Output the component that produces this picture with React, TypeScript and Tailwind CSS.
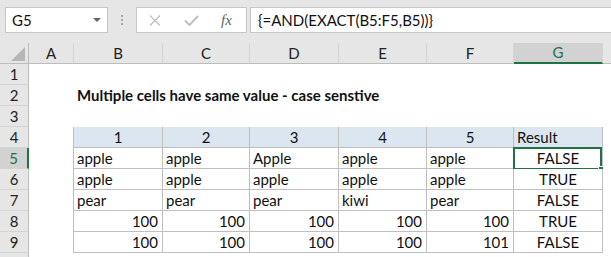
import React from 'react';

const font = { fontFamily: "Lato, 'Open Sans', sans-serif" };

const colWidths = ['w-[29px]', 'w-[45px]', 'w-[89px]', 'w-[87px]', 'w-[89px]', 'w-[88px]', 'w-[87px]', 'w-[89px]'];
const letters = ['A', 'B', 'C', 'D', 'E', 'F', 'G'];

type Cell = { v: string; align: 'l' | 'r' | 'c' };

const t = (v: string): Cell => ({ v, align: 'l' });
const n = (v: string): Cell => ({ v, align: 'r' });
const b = (v: string): Cell => ({ v, align: 'c' });

const tableRows: Cell[][] = [
  [b('1'), b('2'), b('3'), b('4'), b('5'), t('Result')],
  [t('apple'), t('apple'), t('Apple'), t('apple'), t('apple'), b('FALSE')],
  [t('apple'), t('apple'), t('apple'), t('apple'), t('apple'), b('TRUE')],
  [t('pear'), t('pear'), t('pear'), t('kiwi'), t('pear'), b('FALSE')],
  [n('100'), n('100'), n('100'), n('100'), n('100'), b('TRUE')],
  [n('100'), n('100'), n('100'), n('100'), n('101'), b('FALSE')],
];

const alignCls = { l: 'justify-start pl-[3px]', r: 'justify-end pr-[4px]', c: 'justify-center' };

function RowHeader({ label, selected }: { label: string; selected?: boolean }) {
  return (
    <div
      className={`w-[29px] shrink-0 h-full flex items-center justify-center border-b border-[#d4d4d4] text-[15px] ${
        selected ? 'bg-[#d2d2d2] text-[#217346] border-r-2 border-r-[#217346]' : 'bg-[#e6e6e6] text-[#222] border-r border-r-[#bdbdbd]'
      }`}
    >
      {label}
    </div>
  );
}

export default function App() {
  return (
    <div className="w-[611px] h-[257px] overflow-hidden bg-[#e6e6e6] text-[#111]" style={font}>
      {/* formula bar */}
      <div className="h-[43px] flex items-start pt-[7px]">
        <div className="ml-[5px] w-[103px] h-[26px] bg-white border border-[#c6c6c6] flex items-center justify-between pl-[6px] pr-[6px] text-[15px]">
          <span>G5</span>
          <svg width="8" height="5" viewBox="0 0 8 5"><path d="M0 0 L8 0 L4 4 Z" fill="#666" /></svg>
        </div>
        <div className="ml-[13px] w-[3px] h-[26px] flex flex-col justify-center gap-[2px]">
          <div className="w-[2px] h-[2px] bg-[#a8a8a8]" />
          <div className="w-[2px] h-[2px] bg-[#a8a8a8]" />
          <div className="w-[2px] h-[2px] bg-[#a8a8a8]" />
        </div>
        <div className="ml-[12px] w-[111px] h-[26px] bg-white border border-[#c6c6c6] flex items-center">
          <svg className="ml-[12px]" width="12" height="11" viewBox="0 0 12 11">
            <path d="M1 0.5 L11 10.5 M11 0.5 L1 10.5" stroke="#c0c0c0" strokeWidth="1.3" />
          </svg>
          <svg className="ml-[23px]" width="15" height="11" viewBox="0 0 15 11">
            <path d="M1 5.5 L5.5 10 L14 1" stroke="#c0c0c0" strokeWidth="2" fill="none" />
          </svg>
          <span className="ml-[22px] text-[15px] italic text-[#666]" style={{ fontFamily: "'Liberation Serif', serif" }}>
            fx
          </span>
        </div>
        <div className="ml-[3px] flex-1 h-[26px] bg-white border border-[#c6c6c6] border-r-0 flex items-center pl-[7px] text-[15px]">
          {'{=AND(EXACT(B5:F5,B5))}'}
        </div>
      </div>

      {/* column headers */}
      <div className="h-[21px] flex">
        <div className="w-[29px] shrink-0 h-full border-r border-b border-[#bdbdbd] relative">
          <svg className="absolute left-[11px] top-[4px]" width="14" height="14" viewBox="0 0 14 14">
            <path d="M14 0 L14 14 L0 14 Z" fill="#b6b6b6" />
          </svg>
        </div>
        {letters.map((l, i) => (
          <div
            key={l}
            className={`${colWidths[i + 1]} shrink-0 h-full flex items-center justify-center text-[15px] border-r border-r-[#d4d4d4] ${
              l === 'G' ? 'bg-[#d2d2d2] text-[#217346] border-b-2 border-b-[#217346]' : 'text-[#222] border-b border-b-[#bdbdbd]'
            }`}
          >
            {l}
          </div>
        ))}
        <div className="flex-1 h-full border-b border-[#bdbdbd]" />
      </div>

      {/* rows 1-3 */}
      {['1', '2', '3'].map((r) => (
        <div key={r} className="h-[21px] flex">
          <RowHeader label={r} />
          <div className="flex-1 h-full bg-white flex items-center">
            {r === '2' && (
              <span className="ml-[48px] text-[15px] font-bold">
                Multiple cells have same value - case senstive
              </span>
            )}
          </div>
        </div>
      ))}

      {/* table rows 4-9 */}
      {tableRows.map((row, ri) => (
        <div key={ri} className="h-[21px] flex">
          <RowHeader label={String(ri + 4)} selected={ri === 1} />
          <div className="w-[45px] shrink-0 h-full bg-white border-r border-[#bfbfbf]" />
          {row.map((c, ci) => (
            <div
              key={ci}
              className={`${colWidths[ci + 2]} shrink-0 h-full flex items-center border-r border-b border-[#bfbfbf] text-[15px] relative ${alignCls[c.align]} ${
                ri === 0 ? 'bg-[#dce6f1]' : 'bg-white'
              }`}
            >
              {c.v}
              {ri === 1 && ci === 5 && (
                <div className="absolute left-[-1px] top-[-1px] w-[89px] h-[23px] border-2 border-[#217346]">
                  <div className="absolute right-[-4px] bottom-[-4px] w-[6px] h-[6px] bg-[#217346] border border-white" />
                </div>
              )}
            </div>
          ))}
          <div className="flex-1 h-full bg-white" />
        </div>
      ))}

      {/* row 10 partial */}
      <div className="h-[21px] flex">
        <RowHeader label="" />
        <div className="flex-1 h-full bg-white" />
      </div>
    </div>
  );
}
